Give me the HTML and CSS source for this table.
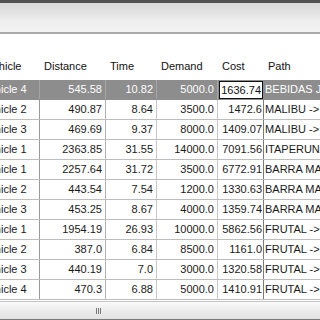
FILE: index.html
```html
<!DOCTYPE html>
<html>
<head>
<meta charset="utf-8">
<link rel="stylesheet" href="styles.css">
</head>
<body>
<div class="frame">
  <div class="topedge"></div>
  <div class="toolbar"></div>
  <div class="spacer"></div>
  <div class="grid">
    <div class="row head">
      <div class="c c1">Vehicle</div><div class="c">Distance</div><div class="c">Time</div><div class="c">Demand</div><div class="c">Cost</div><div class="c">Path</div>
    </div>
    <div class="row sel">
      <div class="c c1">Vehicle 4</div><div class="c n">545.58</div><div class="c n">10.82</div><div class="c n">5000.0</div><div class="c n focus">1636.74</div><div class="c p">BEBIDAS JUIZ DE FORA</div>
    </div>
    <div class="row"><div class="c c1">Vehicle 2</div><div class="c n">490.87</div><div class="c n">8.64</div><div class="c n">3500.0</div><div class="c n">1472.6</div><div class="c p">MALIBU -&gt; CENTRO</div></div>
    <div class="row"><div class="c c1">Vehicle 3</div><div class="c n">469.69</div><div class="c n">9.37</div><div class="c n">8000.0</div><div class="c n">1409.07</div><div class="c p">MALIBU -&gt; CENTRO</div></div>
    <div class="row"><div class="c c1">Vehicle 1</div><div class="c n">2363.85</div><div class="c n">31.55</div><div class="c n">14000.0</div><div class="c n">7091.56</div><div class="c p">ITAPERUNA -&gt;</div></div>
    <div class="row"><div class="c c1">Vehicle 1</div><div class="c n">2257.64</div><div class="c n">31.72</div><div class="c n">3500.0</div><div class="c n">6772.91</div><div class="c p">BARRA MANSA</div></div>
    <div class="row"><div class="c c1">Vehicle 2</div><div class="c n">443.54</div><div class="c n">7.54</div><div class="c n">1200.0</div><div class="c n">1330.63</div><div class="c p">BARRA MANSA</div></div>
    <div class="row"><div class="c c1">Vehicle 3</div><div class="c n">453.25</div><div class="c n">8.67</div><div class="c n">4000.0</div><div class="c n">1359.74</div><div class="c p">BARRA MANSA</div></div>
    <div class="row"><div class="c c1">Vehicle 1</div><div class="c n">1954.19</div><div class="c n">26.93</div><div class="c n">10000.0</div><div class="c n">5862.56</div><div class="c p">FRUTAL -&gt;</div></div>
    <div class="row"><div class="c c1">Vehicle 2</div><div class="c n">387.0</div><div class="c n">6.84</div><div class="c n">8500.0</div><div class="c n">1161.0</div><div class="c p">FRUTAL -&gt;</div></div>
    <div class="row"><div class="c c1">Vehicle 3</div><div class="c n">440.19</div><div class="c n">7.0</div><div class="c n">3000.0</div><div class="c n">1320.58</div><div class="c p">FRUTAL -&gt;</div></div>
    <div class="row"><div class="c c1">Vehicle 4</div><div class="c n">470.3</div><div class="c n">6.88</div><div class="c n">5000.0</div><div class="c n">1410.91</div><div class="c p">FRUTAL -&gt;</div></div>
  </div>
  <div class="hscroll"><div class="grip"><i></i><i></i><i></i></div></div>
  <div class="botedge"></div>
</div>
</body>
</html>
```
FILE: styles.css
```css
html, body { margin: 0; padding: 0; background: #fff; }
.frame {
  width: 320px; height: 320px; overflow: hidden;
  display: flex; flex-direction: column;
  font-family: "Liberation Sans", Arial, sans-serif; font-size: 11px; color: #1a1a1a;
}
.topedge { height: 3px; background: #505050; flex: none; }
.toolbar {
  height: 29px; flex: none;
  background: linear-gradient(#d6d6d6, #eeeeee 60%, #f2f2f2);
  border-bottom: 2px solid #a9a9a9;
}
.spacer { height: 18px; flex: none; background: #fff; }
.grid { margin-left: -18px; flex: none; }
.row {
  display: grid;
  grid-template-columns: 58px 66px 51px 61px 46px 130px;
  height: 20px;
  box-sizing: border-box;
  border-bottom: 1px solid #bdbdbd;
}
.row.head { height: 28px; border-bottom: 0; align-items: center; color: #111; }
.row.head .c { padding-left: 4px; border-right: 0; }
.c {
  white-space: nowrap; overflow: hidden;
  border-right: 1px solid #c8c8c8;
  line-height: 19px; box-sizing: border-box;
}
.c.c1 { padding-left: 0; border-right-color: #9a9a9a; }
.c.n { text-align: right; padding-right: 3px; }
.row > .c:nth-child(2) { border-right-color: #b0b0b0; }
.row > .c:nth-child(5) { padding-right: 1px; border-right-color: #7a7a7a; }
.c.p { border-right: 0; padding-left: 1px; }
.row.sel { background: #8d8d8d; color: #fff; border-bottom-color: #8d8d8d; }
.row.sel .c { border-right-color: #a5a5a5; }
.row.sel .c.focus {
  background: #fff; color: #111;
  border: 1px solid #111; line-height: 17px; margin: 1px 1px 0 1px;
}
.hscroll {
  height: 17px; flex: none; margin-top: 1px;
  border-top: 1px solid #c4c4c4;
  background: linear-gradient(#fafafa, #ececec 50%, #e2e2e2);
  display: flex; align-items: center; padding-left: 96px;
}
.grip { display: flex; gap: 1px; height: 6px; }
.grip i { display: block; width: 1px; height: 6px; background: #777; }
.botedge { height: 4px; flex: none; background: #7a7a7a; }
```
